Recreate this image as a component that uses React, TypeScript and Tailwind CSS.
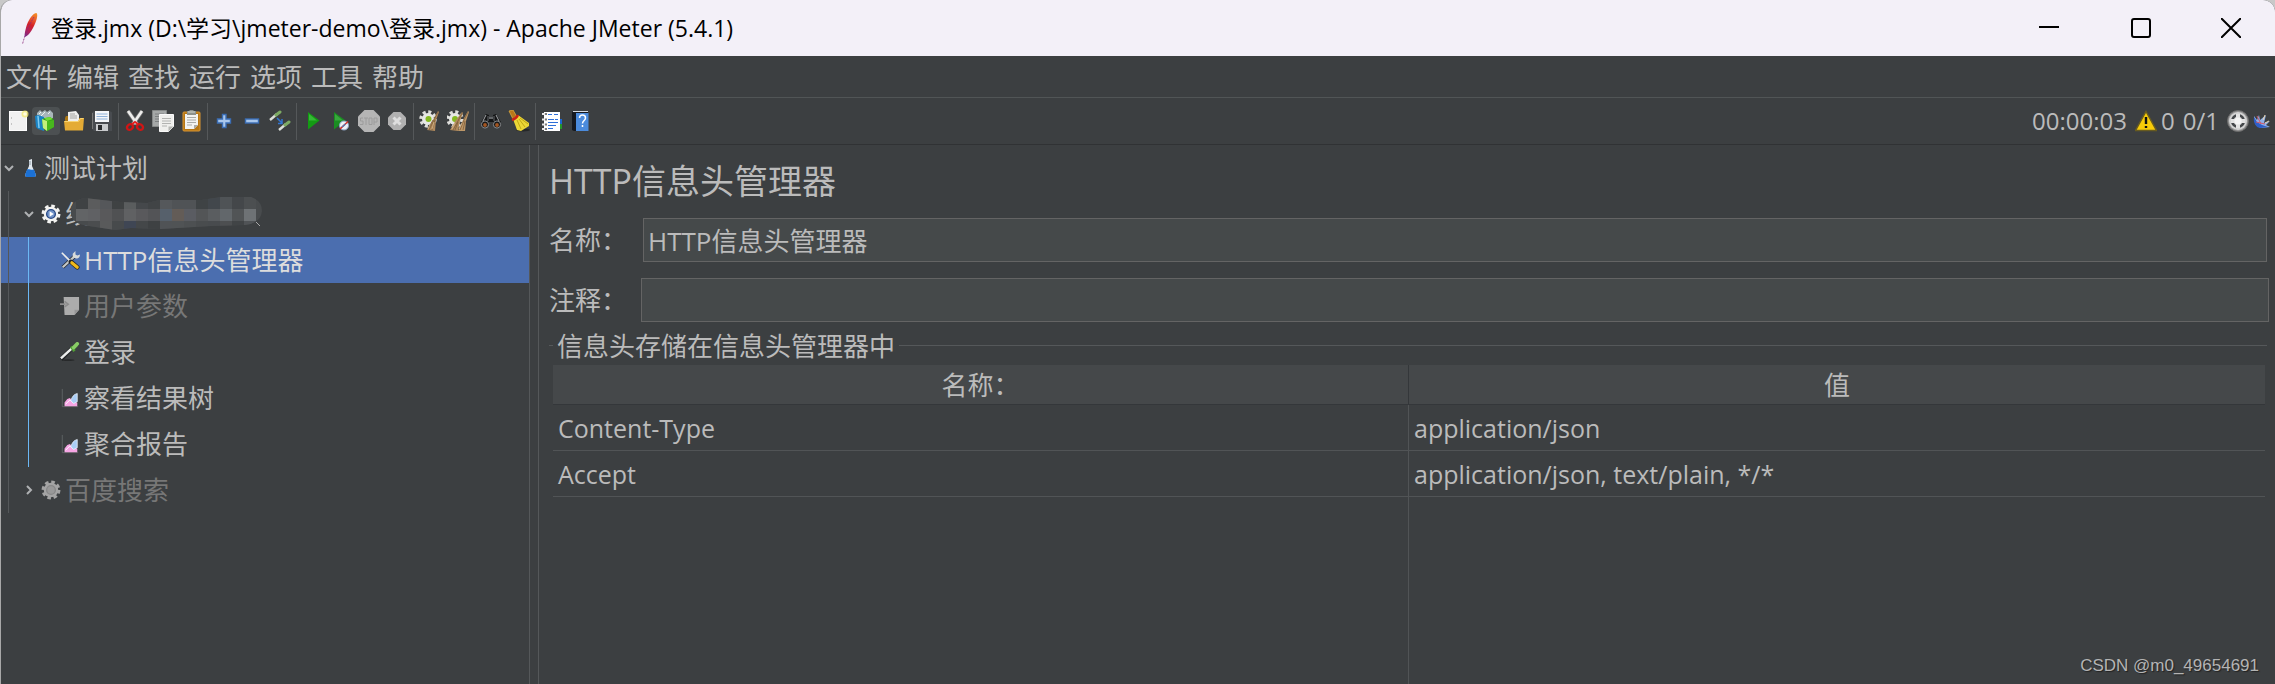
import type { ReactNode } from "react";

const Icon = ({ size = 22, children }: { size?: number; children: ReactNode }) => (
  <svg width={size} height={size} viewBox="0 0 22 22" fill="none" className="block shrink-0" aria-hidden="true">
    {children}
  </svg>
);

const Feather = () => (
  <svg width="18" height="33" viewBox="0 0 18 33" fill="none" className="block" aria-hidden="true">
    <defs>
      <linearGradient id="feather" x1="15" y1="0" x2="3" y2="25" gradientUnits="userSpaceOnUse">
        <stop stopColor="#f69923" />
        <stop offset="0.3" stopColor="#e8552d" />
        <stop offset="0.5" stopColor="#d22128" />
        <stop offset="0.75" stopColor="#b3215b" />
        <stop offset="1" stopColor="#6d2c8f" />
      </linearGradient>
    </defs>
    <path d="M15.500 1C12 1 8 7 6 12.500C4.500 17 3.500 21 3.500 25C7 24 10 20 12.500 15C15 10 17.500 3 15.500 1Z" fill="url(#feather)" />
    <path d="M13 5C9 12 5 19 1.500 32" stroke="#8c2c7c" strokeWidth="0.8" strokeDasharray="2 1" />
  </svg>
);

const NewIcon = () => (
  <Icon>
    <rect x="2.500" y="1.500" width="17" height="19" fill="#f1f1f1" stroke="#fdfdfd" />
    <path d="M4 8h1M4 14h1" stroke="#999" />
    <circle cx="18" cy="4" r="3.500" fill="#f3ea7a" fillOpacity="0.8" />
    <circle cx="18" cy="4" r="1.800" fill="#fffde0" />
  </Icon>
);

const TemplatesIcon = () => (
  <Icon>
    <path d="M2 3l3-3 2 2 3-2 2 2 3-2 3 3v5H2z" fill="#a9b6ba" />
    <path d="M4 4l2-2M8 4l2-2M13 4l2-2M5 7l4-4" stroke="#eef3f4" />
    <path d="M0 6l3-1 6 2v14l-6-2-2-2z" fill="#1b83c4" />
    <path d="M3 6l1 12" stroke="#7ecbf0" strokeWidth="1.500" />
    <path d="M7 9l8-2 4 3v7l-7 4-4-3z" fill="#2f9e12" />
    <path d="M7 9l5 2v10l-4-3z" fill="#c3f07c" />
    <path d="M12 11l7-1v7l-7 4z" fill="#48b81e" />
    <path d="M9 8l6-1 3 2-6 2z" fill="#6fdd35" />
  </Icon>
);

const OpenIcon = () => (
  <Icon>
    <path d="M2 8l1-2h4l1 2h12v12H2z" fill="#a87413" />
    <path d="M5 2l8-1 3 4v8H5z" fill="#eeeeec" />
    <path d="M7 4h5M7 6h7M7 8h7" stroke="#a3a3a0" />
    <path d="M1 11h14l2-3h4l-1 12.500H2z" fill="#e4ab35" />
    <path d="M1.500 11.500h14l2-3h3" stroke="#f8d473" />
  </Icon>
);

const SaveIcon = () => (
  <Icon>
    <path d="M1 2.500L2 1.500h18l1 1V21H3l-2-2z" fill="#494c50" />
    <path d="M1.500 3v16" stroke="#777" />
    <rect x="4" y="1" width="14" height="11" fill="#f5f7fa" />
    <path d="M5.500 4h11M5.500 6.500h11M5.500 9h11" stroke="#8fb2da" />
    <path d="M5 14h12v7H5z" fill="#c9cbcd" />
    <path d="M7 15h4v5H7z" fill="#292b2d" />
  </Icon>
);

const CutIcon = () => (
  <Icon>
    <path d="M4 1l9 13M18 1L9 14" stroke="#777" strokeWidth="4" />
    <path d="M4 1l9 13M18 1L9 14" stroke="#eeeeec" strokeWidth="2.600" />
    <ellipse cx="6" cy="17" rx="3.200" ry="2.600" transform="rotate(-35 6 17)" stroke="#d01515" strokeWidth="2.400" />
    <ellipse cx="16" cy="17" rx="3.200" ry="2.600" transform="rotate(35 16 17)" stroke="#d01515" strokeWidth="2.400" />
    <path d="M8 14l3-2 3 2" stroke="#e52121" strokeWidth="2" />
  </Icon>
);

const CopyIcon = () => (
  <Icon>
    <path d="M.5.5h14v16H.5z" fill="#a5a8a8" stroke="#858888" />
    <path d="M3 4h9M3 6.500h9M3 9h5M3 11.500h5" stroke="#7c7f80" />
    <path d="M7.500 4.500h14v12l-5 5h-9z" fill="#efefed" stroke="#fafafa" />
    <path d="M10 8.500h9M10 11h9M10 13.500h9M10 16h5" stroke="#b2b3b1" />
    <path d="M21.500 16.500h-5v5z" fill="#b6b7b4" />
  </Icon>
);

const PasteIcon = () => (
  <Icon>
    <rect x="3" y="2" width="17" height="19" rx="1" fill="#b77714" stroke="#d99632" />
    <path d="M5 4h13v11l-4 4H5z" fill="#f3f3f1" />
    <path d="M7 7.500h9M7 10h9M7 12.500h9M7 15h5" stroke="#aaaba8" />
    <path d="M18 15h-4v4z" fill="#a9aaa6" />
    <path d="M7 1h2l1-1h3l1 1h2v4H7z" fill="#8d918c" />
    <path d="M8 2h7" stroke="#d3d7cf" />
  </Icon>
);

const PlusIcon = () => (
  <Icon>
    <path d="M9.500 4.500h3.500V9h4.500v4H13v4.500H9.500V13H4.500V9h5z" fill="#a9c7ec" stroke="#3a6db5" strokeWidth="1.400" />
  </Icon>
);

const MinusIcon = () => (
  <Icon>
    <rect x="4.500" y="9" width="13" height="4" fill="#a9c7ec" stroke="#3a6db5" strokeWidth="1.400" />
  </Icon>
);

const ToggleIcon = () => (
  <Icon>
    <path d="M1 10L8 4" stroke="#dce0db" strokeWidth="2.400" />
    <path d="M7 5l4-3" stroke="#7dab64" strokeWidth="3" strokeLinecap="round" />
    <path d="M10 20l7-6" stroke="#dce0db" strokeWidth="2.400" />
    <path d="M16 15l4-3" stroke="#7dab64" strokeWidth="3" strokeLinecap="round" />
    <path d="M8 8l5 5M13 9v4.500H9" stroke="#3276d2" strokeWidth="1.500" />
  </Icon>
);

const PlayIcon = () => (
  <Icon>
    <path d="M6 2l11.500 8.500L6 19.500z" fill="#139b13" />
    <path d="M7 4l8 6.500H7z" fill="#36b936" />
  </Icon>
);

const PlayNoPauseIcon = () => (
  <Icon>
    <path d="M4 2l11.500 8.500L4 19.500z" fill="#1a8d22" />
    <path d="M5 4l8 6.500H5z" fill="#38a83c" />
    <circle cx="14" cy="15.500" r="4.500" fill="#eef1f7" stroke="#8fa4c7" />
    <path d="M10 19l8-7.500" stroke="#d92e25" strokeWidth="1.500" />
    <path d="M12 17l3.500-3" stroke="#5579b5" strokeWidth="1.500" />
  </Icon>
);

const StopIcon = () => (
  <Icon>
    <path d="M6.500 0h9L22 6.500v9L15.500 22h-9L0 15.500v-9z" fill="#b5b5b5" />
    <path d="M5 8H2.500v3H5v3.500H2M6 8h4M8 8v7M11 8h3v6.500h-3zM16 15V8h3v4h-3" stroke="#9c9c9c" />
  </Icon>
);

const ShutdownIcon = () => (
  <Icon>
    <path d="M7.500 2h7L20 7.500v7L14.500 20h-7L2 14.500v-7z" fill="#b1b1b1" />
    <path d="M7.500 7.500l7 7M14.500 7.500l-7 7" stroke="#dedede" strokeWidth="3" />
  </Icon>
);

const ClearIcon = () => (
  <Icon>
    <circle cx="9" cy="9" r="7" stroke="#dededb" strokeWidth="3.500" strokeDasharray="3 2.500" />
    <circle cx="9" cy="9" r="6" fill="#e7e8e5" />
    <circle cx="9.500" cy="9" r="3" fill="#85b921" />
    <path d="M19 1l1 1-3 8-1 11-8-1 6-10z" fill="#b08a5d" />
    <path d="M19 2l-4 8-5 10M16 10l-3 10M14 10l-4 7" stroke="#7e5d39" strokeWidth="0.800" />
    <path d="M11 14l-2 5M15 12l-2 7" stroke="#dbbd92" strokeWidth="0.800" />
  </Icon>
);

const ClearAllIcon = () => (
  <Icon>
    <circle cx="8" cy="9" r="7" stroke="#dededb" strokeWidth="3.500" strokeDasharray="3 2.500" />
    <circle cx="8" cy="9" r="6" fill="#e7e8e5" />
    <circle cx="8" cy="9" r="3" fill="#85b921" />
    <path d="M15 2l1 1-3 8-2 10-8-1 6-10z" fill="#b08a5d" />
    <path d="M21 1l1 1-3 9-1 10h-7l5-11z" fill="#bd9768" />
    <path d="M15 3l-4 8-5 9M21 2l-4 8-4 10M18 11l-2 9M11 12l-3 8" stroke="#7e5d39" strokeWidth="0.800" />
    <path d="M8 13l-3 6M15 13l-3 6" stroke="#dbbd92" strokeWidth="0.800" />
  </Icon>
);

const SearchIcon = () => (
  <Icon>
    <path d="M6 4l3 1v4h4V5l3-1 5 8-1 6h-5l-2-6h-4l-2 6H2l-1-6z" fill="#141516" />
    <path d="M6 5L3 11M16 5l3 6" stroke="#a3a6a9" />
    <path d="M8 6v5M14 6v5" stroke="#65686b" />
    <circle cx="5" cy="14.500" r="3.600" fill="#191919" stroke="#8a8d90" />
    <circle cx="17" cy="14.500" r="3.600" fill="#191919" stroke="#8a8d90" />
    <circle cx="5" cy="15" r="1.900" fill="#a45622" />
    <circle cx="17" cy="15" r="1.900" fill="#a45622" />
    <path d="M9 8h4" stroke="#898d90" />
  </Icon>
);

const BroomIcon = () => (
  <Icon>
    <ellipse cx="15" cy="20" rx="7" ry="1.500" fill="#252728" />
    <path d="M1 1l4-1 4 7-4 2z" fill="#b8761a" stroke="#dba83d" strokeWidth="0.800" />
    <path d="M5 9l5-4 11 8v3l-8 5-4-1z" fill="#ecd736" />
    <path d="M9 10l4 9M11 9l6 8M12 8l8 6" stroke="#b49b0b" strokeWidth="0.800" />
    <path d="M4 10c3-1 5-3 6-5" stroke="#c92118" strokeWidth="2.500" />
  </Icon>
);

const NotebookIcon = () => (
  <Icon>
    <path d="M17 9h4v5h-4z" fill="#1d67cd" />
    <path d="M17 14h4v5h-4z" fill="#24942b" />
    <rect x="3" y="2" width="16" height="19" fill="#fff" />
    <path d="M7 4.500h4M13 4.500h4M7 9.500h6M14 9.500h3M7 12.500h10M7 15.500h8M7 18.500h5" stroke="#2f70d8" strokeWidth="1.200" />
    <path d="M1 4h5M1 9.500h5M1 14.500h5M1 19h5" stroke="#e7e7e7" strokeWidth="2" />
    <path d="M4.500 4h1M4.500 9.500h1M4.500 14.500h1M4.500 19h1" stroke="#111" strokeWidth="2" />
  </Icon>
);

const HelpIcon = () => (
  <Icon>
    <path d="M3 2l2-1h14v20H5l-2-1z" fill="#16191f" />
    <path d="M4 1.500h15" stroke="#d7dce3" />
    <rect x="7" y="3" width="12.500" height="18" fill="#4b8bdc" />
    <path d="M10.500 8c0-4 6-4 6 0 0 2.500-3 2.500-3 5.500M13.500 15v2" stroke="#fff" strokeWidth="1.500" />
  </Icon>
);

const WarningIcon = () => (
  <Icon>
    <path d="M11 1.500L21.500 20.500H.5z" fill="#f7cb09" stroke="#685b1f" strokeWidth="1.500" />
    <path d="M11 7v7M11 16v2" stroke="#111" strokeWidth="2.400" />
  </Icon>
);

const RemoteIcon = () => (
  <Icon>
    <circle cx="11" cy="11" r="10.500" fill="#989898" stroke="#6c6c6c" />
    <circle cx="11" cy="11" r="9" fill="#d4d4d4" />
    <circle cx="11" cy="11" r="5.800" stroke="#44474a" strokeWidth="2.600" />
    <path d="M11 4v14M4 11h14" stroke="#e2e2e2" strokeWidth="4" />
    <circle cx="11" cy="11" r="3.600" fill="#f4f4f4" />
  </Icon>
);

const WingIcon = () => (
  <svg width="18" height="22" viewBox="0 0 18 22" fill="none" className="block" aria-hidden="true">
    <path d="M1 6c0 6 2 10 7 12l9-1-4-2 4-4-6 2 2-8-6 5-1-5-2 5z" fill="#8eafe8" />
    <path d="M1 7c-1 6 2 11 7 11l7-1-6-2-5-3z" fill="#2f5fc8" />
    <path d="M4 6l4 8M3 12l9 2" stroke="#cf5a6c" />
    <path d="M12 5l-2 5M16 11l-4 2" stroke="#edd7ae" />
  </svg>
);

const FlaskIcon = () => (
  <svg width="11" height="20" viewBox="0 0 11 20" className="block shrink-0" aria-hidden="true">
    <path d="M4 2l3-1v7l4 9-1 2H1l-1-2 4-9z" fill="#e1e8ef" />
    <path d="M2 11.500c2-1 4 1 7 0l2 5.500-1 2H1l-1-2z" fill="#1c71d4" />
    <path d="M5 3v4" stroke="#8b98a2" />
  </svg>
);

const GearIcon = ({ disabled = false }: { disabled?: boolean }) => (
  <Icon size={20}>
    <circle cx="11" cy="11" r="8.700" stroke={disabled ? "#a4a4a4" : "#f3f3f1"} strokeWidth="3.400" strokeDasharray="3.900 2.930" />
    <circle cx="11" cy="11" r="8" fill={disabled ? "#a4a4a4" : "#f3f3f1"} />
    <circle cx="11" cy="11" r="4.800" fill={disabled ? "#999" : "#7193c8"} stroke={disabled ? "#888" : "#294986"} strokeWidth="1.500" />
    {!disabled && <path d="M9.500 8l4.500 3-4.500 3z" fill="#fff" />}
  </Icon>
);

const ToolsIcon = () => (
  <Icon size={20}>
    <path d="M3 19L16 7" stroke="#25272a" strokeWidth="4" />
    <path d="M3 19L16 7" stroke="#c4c8c8" strokeWidth="2.400" />
    <path d="M14 8V4l3-3v4l2 1 3-1c0 4-3 5-5 4z" fill="#d7dada" />
    <path d="M2 3l10 10" stroke="#ececea" strokeWidth="1.800" />
    <path d="M12 13l7 6" stroke="#25272a" strokeWidth="5" strokeLinecap="round" />
    <path d="M13 14l6 5" stroke="#f0b91c" strokeWidth="3.400" strokeLinecap="round" />
  </Icon>
);

const ParamsIcon = () => (
  <Icon size={20}>
    <path d="M4 1h17v14l-5 6H5z" fill="#acacac" />
    <path d="M21 15h-5v6z" fill="#969696" />
    <path d="M0 9h6M5 6l4 3-4 3" stroke="#8c8c8c" strokeWidth="1.800" />
  </Icon>
);

const SamplerIcon = () => (
  <Icon size={20}>
    <ellipse cx="9" cy="20" rx="7" ry="1" fill="#27292a" />
    <path d="M1 19L13 7" stroke="#202324" strokeWidth="4.500" />
    <path d="M1 18L13 7" stroke="#eceeed" strokeWidth="2.800" />
    <path d="M12 5l4 5M14 8l5-5" stroke="#4f9b35" strokeWidth="3" />
    <path d="M15 6l4-4" stroke="#89cc66" strokeWidth="4" strokeLinecap="round" />
  </Icon>
);

const GraphIcon = () => (
  <Icon size={20}>
    <path d="M2.500 1v19.500H20" stroke="#606466" />
    <path d="M5 20v-4l3-4 3-1 3 4 5 1v4z" fill="#f6a5e4" />
    <path d="M6 18l5-5 4 4" stroke="#fff" />
    <path d="M12 14c1-4 3-7 7-8v9l-4 2z" fill="#a9cdf5" stroke="#eef6ff" strokeWidth="0.800" />
  </Icon>
);

const Chevron = ({ open = false }: { open?: boolean }) => (
  <svg width="12" height="12" viewBox="0 0 12 12" fill="none" className="block shrink-0" aria-hidden="true">
    <path d={open ? "M2 4l4 4 4-4" : "M4 2l4 4-4 4"} stroke="#afb1b3" strokeWidth="2" />
  </svg>
);

// 12px blocks that hide the thread group name
const MOSAIC = [
  ["#3f4244", "#5b5c5d", "#55575a", "#3f4243", "#5a5d5e", "#45484b", "#414446", "#55585b", "#505356", "#505356", "#3f4345", "#42474c", "#4f5356", "#44474a", "#4c4f51"],
  ["#626466", "#606164", "#59595b", "#505153", "#606163", "#59595c", "#535457", "#56606b", "#635c57", "#5a5c62", "#535557", "#5a5d60", "#62676b", "#515456", "#6e7275"],
  ["#484b4d", "#4b4d4f", "#595a5b", "#474a4c", "#3f4654", "#444749", "#3e4143", "#505356", "#505355", "#4d5052", "#494c4e", "#484b4e", "#4d4f51", "#414446", "#505356"],
];

const Mosaic = () => (
  <svg width="192" height="34" viewBox="0 0 192 34" className="absolute top-1/2 left-1.5 -translate-y-1/2" aria-hidden="true">
    <defs>
      <clipPath id="smear">
        <path d="M0 10Q4 2 14 1L40 4L50 5L76 6L88 3L130 3L150 0L180 0Q191 4 191 14Q190 26 174 28L140 29L90 32L60 31L44 33L18 29Q2 27 0 18Z" />
      </clipPath>
    </defs>
    <g clipPath="url(#smear)">
      <rect width="192" height="34" fill="#484b4d" />
      {MOSAIC.map((row, y) => row.map((fill, x) => <rect key={`${x}-${y}`} x={x * 12 + 5} y={y * 12} width="12" height="12" fill={fill} />))}
    </g>
    <path d="M185 25l4 4" stroke="#aaa" />
  </svg>
);

const MENUS = ["文件", "编辑", "查找", "运行", "选项", "工具", "帮助"];

const TOOL_GROUPS = [
  [
    { label: "新建", icon: <NewIcon /> },
    { label: "模板", icon: <TemplatesIcon />, hovered: true },
    { label: "打开", icon: <OpenIcon /> },
    { label: "保存", icon: <SaveIcon /> },
  ],
  [
    { label: "剪切", icon: <CutIcon /> },
    { label: "复制", icon: <CopyIcon /> },
    { label: "粘贴", icon: <PasteIcon /> },
  ],
  [
    { label: "展开", icon: <PlusIcon /> },
    { label: "折叠", icon: <MinusIcon /> },
    { label: "切换", icon: <ToggleIcon /> },
  ],
  [
    { label: "启动", icon: <PlayIcon /> },
    { label: "不停顿启动", icon: <PlayNoPauseIcon /> },
    { label: "停止", icon: <StopIcon /> },
    { label: "关闭", icon: <ShutdownIcon /> },
  ],
  [
    { label: "清除", icon: <ClearIcon /> },
    { label: "清除全部", icon: <ClearAllIcon /> },
  ],
  [
    { label: "查找", icon: <SearchIcon /> },
    { label: "重置查找", icon: <BroomIcon /> },
  ],
  [
    { label: "函数助手", icon: <NotebookIcon /> },
    { label: "帮助", icon: <HelpIcon /> },
  ],
];

const CHILDREN = [
  { label: "HTTP信息头管理器", icon: <ToolsIcon />, selected: true },
  { label: "用户参数", icon: <ParamsIcon />, disabled: true },
  { label: "登录", icon: <SamplerIcon /> },
  { label: "察看结果树", icon: <GraphIcon /> },
  { label: "聚合报告", icon: <GraphIcon /> },
];

const HEADERS = [
  { name: "Content-Type", value: "application/json" },
  { name: "Accept", value: "application/json, text/plain, */*" },
];

function TitleBar() {
  return (
    <header className="flex h-14 items-center justify-between bg-[#f3f0f8] pl-5 text-black">
      <div className="flex items-center gap-3">
        <Feather />
        <h1 className="text-[23px] whitespace-pre">登录.jmx (D:\学习\jmeter-demo\登录.jmx) - Apache JMeter (5.4.1)</h1>
      </div>
      <div className="flex">
        <button aria-label="最小化" className="flex h-14 w-23 items-center justify-center">
          <svg width="20" height="20" viewBox="0 0 20 20" stroke="currentColor" strokeWidth="2" aria-hidden="true">
            <path d="M0 9h20" />
          </svg>
        </button>
        <button aria-label="最大化" className="flex h-14 w-23 items-center justify-center">
          <svg width="20" height="20" viewBox="0 0 20 20" fill="none" stroke="currentColor" strokeWidth="2" aria-hidden="true">
            <rect x="1" y="1" width="18" height="18" rx="2" />
          </svg>
        </button>
        <button aria-label="关闭窗口" className="flex h-14 w-22 items-center justify-center">
          <svg width="20" height="20" viewBox="0 0 20 20" stroke="currentColor" strokeWidth="2" aria-hidden="true">
            <path d="M0 0l20 20M20 0L0 20" />
          </svg>
        </button>
      </div>
    </header>
  );
}

function Toolbar() {
  return (
    <div className="flex h-[47px] items-center justify-between border-b border-[#303234] pr-1 pl-[3px]">
      <div className="flex items-center">
        {TOOL_GROUPS.map((group, i) => (
          <div key={i} className="flex items-center">
            {i > 0 && <div className="mx-0.5 h-[37px] w-px bg-[#55585a]"></div>}
            {group.map((tool) => (
              <button
                key={tool.label}
                aria-label={tool.label}
                className={`flex size-7 items-center justify-center rounded-sm ${"hovered" in tool ? "bg-[#4c5052]" : ""}`}
              >
                {tool.icon}
              </button>
            ))}
          </div>
        ))}
      </div>
      <div className="flex items-center text-2xl">
        <span className="mr-2">00:00:03</span>
        <WarningIcon />
        <span className="mr-2 ml-1">0</span>
        <span className="mr-2">0/1</span>
        <RemoteIcon />
        <span className="ml-1">
          <WingIcon />
        </span>
      </div>
    </div>
  );
}

function Tree() {
  return (
    <nav className="w-[529px] shrink-0 border-r border-[#55585a]">
      <ul>
        <li>
          <div className="flex h-[46px] items-center pl-0.5">
            <Chevron open />
            <span className="ml-2.5">
              <FlaskIcon />
            </span>
            <span className="ml-2">测试计划</span>
          </div>
          <ul className="relative">
            <li>
              <div className="flex h-[46px] items-center pl-[22px]">
                <Chevron open />
                <span className="mr-1 ml-1.5">
                  <GearIcon />
                </span>
                <div className="relative h-full grow">
                  <span className="leading-[46px]">线</span>
                  <Mosaic />
                </div>
              </div>
              <ul className="relative">
                {CHILDREN.map((node) => (
                  <li
                    key={node.label}
                    className={`flex h-[46px] items-center gap-1 pl-[59px] ${node.selected ? "bg-[#4b6eaf] text-[#dddddd]" : ""} ${node.disabled ? "text-[#777777]" : ""}`}
                  >
                    {node.icon}
                    <span>{node.label}</span>
                  </li>
                ))}
                <li aria-hidden="true" className="absolute inset-y-0 left-[27px] w-px bg-[#6cb8f5]"></li>
              </ul>
            </li>
            <li className="flex h-[46px] items-center pl-[22px] text-[#777777]">
              <Chevron />
              <span className="mr-1 ml-1.5">
                <GearIcon disabled />
              </span>
              <span>百度搜索</span>
            </li>
            <li aria-hidden="true" className="absolute inset-y-0 left-[7px] w-px bg-[#55585a]"></li>
          </ul>
        </li>
      </ul>
    </nav>
  );
}

function HeaderManager() {
  return (
    <main className="ml-2 flex grow flex-col border-l border-[#55585a] pt-[15px] pr-1.5 pl-2.5">
      <h2 className="text-[34px] leading-[42px]">HTTP信息头管理器</h2>
      <div className="mt-4 flex items-center pr-0.5">
        <label htmlFor="name" className="w-[94px] shrink-0">
          名称：
        </label>
        <input
          id="name"
          defaultValue="HTTP信息头管理器"
          className="h-11 grow border border-[#646464] bg-[#45494a] px-1 outline-none"
        />
      </div>
      <div className="mt-4 flex items-center">
        <label htmlFor="comment" className="w-[92px] shrink-0">
          注释：
        </label>
        <input id="comment" className="h-11 grow border border-[#646464] bg-[#45494a] px-1 outline-none" />
      </div>
      <section className="mt-1 flex grow flex-col pr-0.5" aria-labelledby="stored">
        <div className="flex h-[39px] items-center">
          <div className="mr-1 h-px w-1 bg-[#55585a]"></div>
          <h3 id="stored">信息头存储在信息头管理器中</h3>
          <div className="ml-1 h-px grow bg-[#55585a]"></div>
        </div>
        <div className="flex grow flex-col pr-0.5 pl-1">
          <table className="w-full table-fixed border-separate border-spacing-0">
            <thead>
              <tr className="h-10 bg-[#45484a]">
                <th className="border-r border-b border-[#34373a] p-0 font-normal">名称：</th>
                <th className="border-b border-[#34373a] p-0 font-normal">值</th>
              </tr>
            </thead>
            <tbody className="text-[25px]">
              {HEADERS.map((row) => (
                <tr key={row.name} className="h-[46px]">
                  <td className="border-r border-b border-[#515456] px-[5px] py-0">{row.name}</td>
                  <td className="border-b border-[#515456] px-[5px] py-0">{row.value}</td>
                </tr>
              ))}
            </tbody>
          </table>
          <div className="grid grow grid-cols-2">
            <div className="border-r border-[#515456]"></div>
          </div>
        </div>
      </section>
    </main>
  );
}

export default function App() {
  return (
    <div className="min-h-screen bg-[#c8c8c8]">
      <div className="relative flex min-h-screen flex-col overflow-hidden rounded-t-xl border-l border-[#a8a8a8] bg-[#3c3f41] font-['Open_Sans','Noto_Sans_CJK_SC',sans-serif] text-[26px] leading-9 text-[#bbbbbb]">
        <TitleBar />
        <div role="menubar" className="flex h-[42px] items-center gap-[9px] border-b border-[#515556] pl-[5px]">
          {MENUS.map((menu) => (
            <button key={menu} role="menuitem">
              {menu}
            </button>
          ))}
        </div>
        <Toolbar />
        <div className="flex grow">
          <Tree />
          <HeaderManager />
        </div>
        <div className="absolute right-4 bottom-0 font-['Liberation_Sans',sans-serif] text-[17px] text-[#b4b4b4] [text-shadow:1px_1px_1px_#222]">
          CSDN @m0_49654691
        </div>
      </div>
    </div>
  );
}
